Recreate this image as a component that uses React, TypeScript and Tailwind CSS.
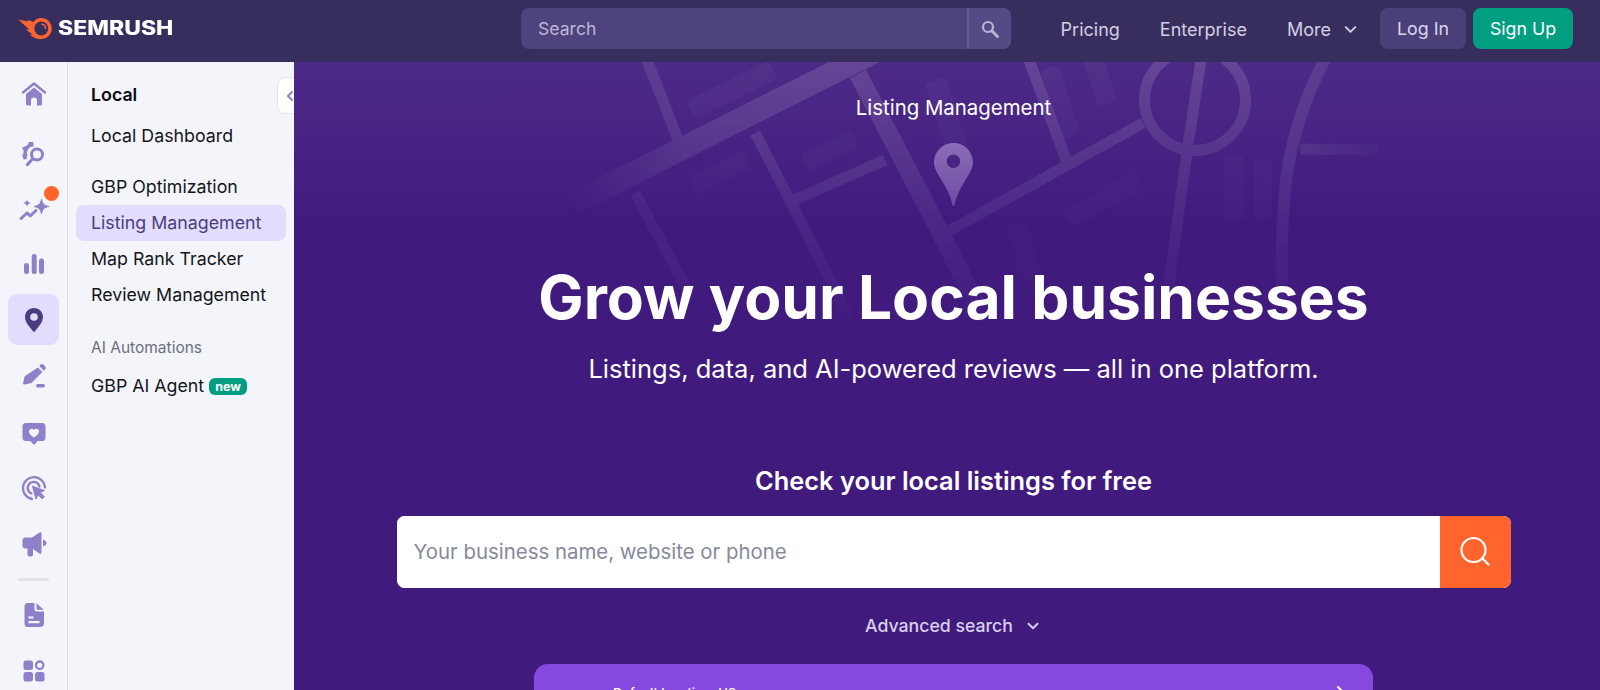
import React from 'react';
import { ChevronDown, ChevronLeft, ChevronRight } from 'lucide-react';

const ICON = '#8f80c9';

function Svg({ children, className = 'h-[26px] w-[26px] overflow-visible' }: { children: React.ReactNode; className?: string }) {
  return (
    <svg viewBox="0 0 26 26" className={className} fill={ICON}>
      {children}
    </svg>
  );
}

const HomeIcon = () => (
  <Svg>
    <path d="M2 11.500 13 2.500l11 9" fill="none" stroke={ICON} strokeWidth="2.400" strokeLinecap="round" strokeLinejoin="round" />
    <path d="M5 13 13 6.500l8 6.500v10a1.500 1.500 0 0 1-1.500 1.500H16v-5a3 3 0 0 0-6 0v5H6.500A1.500 1.500 0 0 1 5 23Z" />
  </Svg>
);

const SeoIcon = () => (
  <Svg>
    <circle cx="16" cy="13.500" r="5.500" fill="none" stroke={ICON} strokeWidth="3" />
    <path d="M11.500 18 6.500 23.500" fill="none" stroke={ICON} strokeWidth="3.200" strokeLinecap="round" />
    <path d="M11.500 3.500A8.500 8.500 0 0 0 5 15.500" fill="none" stroke={ICON} strokeWidth="3.400" />
    <path d="M7.500 1h5v4.500h-5ZM1 7 4.500 5 7 9 3.500 11ZM1 13.500h4l1.200 4-3.500 1.200Z" />
  </Svg>
);

const SparkIcon = () => (
  <Svg>
    <path d="M20.500 4c.8 4.800 2.700 6.700 7.500 7.500-4.800.8-6.700 2.700-7.500 7.500-.8-4.800-2.700-6.700-7.500-7.500 4.800-.8 6.700-2.700 7.500-7.500Z" strokeLinejoin="round" stroke={ICON} />
    <path d="M6 4c.4 2.600 1.400 3.600 4 4-2.600.4-3.600 1.400-4 4-.4-2.600-1.400-3.600-4-4 2.600-.4 3.600-1.400 4-4Z" />
    <path d="M0 23.500 6 18l3.200 2.800L15 15.500" fill="none" stroke={ICON} strokeWidth="3" strokeLinecap="round" strokeLinejoin="round" />
  </Svg>
);

const BarsIcon = () => (
  <Svg>
    <rect x="3" y="12" width="5" height="11" rx="2.500" />
    <rect x="10.700" y="3" width="5" height="20" rx="2.500" />
    <rect x="18" y="7.500" width="5" height="15.500" rx="2.500" />
  </Svg>
);

const PinIcon = () => (
  <svg viewBox="0 0 26 26" className="h-[26px] w-[26px]" fill="#4c3d80">
    <path
      fillRule="evenodd"
      d="M13 1c5 0 9 3.900 9 8.900 0 5.600-5.200 10.300-8 14.300-.5.700-1.500.7-2 0-2.800-4-8-8.700-8-14.300C4 4.900 8 1 13 1Zm0 5.200a3.800 3.800 0 1 0 0 7.600 3.800 3.800 0 0 0 0-7.600Z"
    />
  </svg>
);

const PenIcon = () => (
  <Svg>
    <path d="M19.700 1.600a2 2 0 0 1 2.800 0l1.800 1.800a2 2 0 0 1 0 2.800l-1.500 1.500-4.600-4.600ZM16.800 4.500l4.600 4.600L11 19.500a3 3 0 0 1-1.600.8L3.500 21.500c-.9.200-1.600-.6-1.400-1.500l1.200-5.500c.1-.6.400-1.100.8-1.500Z" />
    <rect x="15" y="21" width="9" height="3.400" rx="1.700" />
  </Svg>
);

const HeartIcon = () => (
  <Svg>
    <path
      fillRule="evenodd"
      d="M5 2h16a3.500 3.500 0 0 1 3.500 3.500v11A3.500 3.500 0 0 1 21 20h-4.500l-2.400 3c-.6.700-1.600.7-2.200 0L9.500 20H5a3.500 3.500 0 0 1-3.500-3.500v-11A3.500 3.500 0 0 1 5 2Zm8 14.500c3.200-2.200 5-3.900 5-6 0-1.600-1.200-2.700-2.600-2.700-1 0-1.900.5-2.400 1.400-.5-.9-1.400-1.400-2.400-1.400C9.200 7.800 8 8.900 8 10.500c0 2.100 1.800 3.800 5 6Z"
    />
  </Svg>
);

const TargetIcon = () => (
  <Svg>
    <path d="M11 24a11 11 0 1 1 13-11.500" fill="none" stroke={ICON} strokeWidth="2.300" strokeLinecap="round" />
    <path d="M10.500 18.500a6 6 0 1 1 8-7" fill="none" stroke={ICON} strokeWidth="2.300" strokeLinecap="round" />
    <path d="M11.500 11.200 23.500 15.500l-4.300 2 4.200 4.200-2.200 2.200-4.200-4.200-2 4.300Z" strokeLinejoin="round" stroke={ICON} />
  </Svg>
);

const MegaphoneIcon = () => (
  <Svg>
    <path d="M18.500 1.500c1-.6 2-.1 2 1.100v18.800c0 1.200-1 1.700-2 1.100L12 18v5.500a2 2 0 0 1-2 2H8.500a2 2 0 0 1-2-2V17.500H4.500A3 3 0 0 1 1.500 14.500v-5A3 3 0 0 1 4.500 6.500H11Z" />
    <path d="M22 8.500c2.300.8 3.500 2 3.500 3.500s-1.200 2.700-3.500 3.500Z" />
  </Svg>
);

const DocIcon = () => (
  <Svg>
    <path
      fillRule="evenodd"
      d="M7 1h6.500v6a2.500 2.500 0 0 0 2.500 2.500h7V21a4 4 0 0 1-3.500 4H7a3.500 3.500 0 0 1-3.500-3.500v-17A3.500 3.500 0 0 1 7 1Zm.5 13.500v2h5v-2Zm0 4.500v2.200h11V19Z"
    />
    <path d="M15.500 1.200 22.800 7.800H16.500a1 1 0 0 1-1-1Z" />
  </Svg>
);

const AppsIcon = () => (
  <Svg>
    <rect x="2.500" y="2.500" width="9.500" height="9.500" rx="2.500" />
    <rect x="2.500" y="14" width="9.500" height="9.500" rx="2.500" />
    <rect x="14" y="14" width="9.500" height="9.500" rx="2.500" />
    <circle cx="18.700" cy="7.200" r="3.700" fill="none" stroke={ICON} strokeWidth="2.300" />
  </Svg>
);

function Rail() {
  return (
    <div className="flex w-[68px] shrink-0 flex-col items-center border-r border-[#dcdde6] pt-[4px]">
      <div className="flex h-[56px] w-full shrink-0 items-center justify-center"><HomeIcon /></div>
      <div className="flex h-[60px] w-full shrink-0 items-center justify-center pt-[4px]"><SeoIcon /></div>
      <div className="relative flex h-[52px] w-full shrink-0 items-center justify-center">
        <SparkIcon />
        <span className="absolute left-[44px] top-[4px] h-[15px] w-[15px] rounded-full bg-[#ff642d]" />
      </div>
      <div className="flex h-[60px] w-full shrink-0 items-center justify-center"><BarsIcon /></div>
      <div className="flex h-[51px] w-[51px] shrink-0 items-center justify-center rounded-[9px] bg-[#e2ddfd]"><PinIcon /></div>
      <div className="flex h-[62px] w-full shrink-0 items-center justify-center"><PenIcon /></div>
      <div className="flex h-[54px] w-full shrink-0 items-center justify-center"><HeartIcon /></div>
      <div className="flex h-[54px] w-full shrink-0 items-center justify-center"><TargetIcon /></div>
      <div className="flex h-[58px] w-full shrink-0 items-center justify-center"><MegaphoneIcon /></div>
      <div className="mt-[5px] h-[3px] w-[31px] shrink-0 rounded-full bg-[#e2e3ea]" />
      <div className="mt-[6px] flex h-[56px] w-full shrink-0 items-center justify-center"><DocIcon /></div>
      <div className="flex h-[56px] w-full shrink-0 items-center justify-center"><AppsIcon /></div>
    </div>
  );
}

function SubNav() {
  const item = 'flex h-[36px] items-center rounded-lg px-[15px] pt-[1px] text-[17.800px] text-[#14151c]';
  return (
    <div className="relative w-[226px] shrink-0 px-[8px] pt-[15px]">
      <div className="flex h-[36px] items-center px-[15px] pt-[1px] text-[17.800px] font-semibold text-[#0b0b12]">Local</div>
      <div className={`${item} mt-[5px]`}>Local Dashboard</div>
      <div className={`${item} mt-[15px]`}>GBP Optimization</div>
      <div className={`${item} bg-[#e2ddfd] !text-[#4c3d80]`}>Listing Management</div>
      <div className={item}>Map Rank Tracker</div>
      <div className={item}>Review Management</div>
      <div className="mt-[17px] flex h-[36px] items-center px-[15px] text-[15.500px] text-[#6c6e80]">AI Automations</div>
      <div className={`${item} mt-[2px] gap-[5px]`}>
        <span>GBP AI Agent</span>
        <span className="rounded-[6px] bg-[#009f81] px-[6px] text-[12.500px] font-bold leading-[17px] text-white">new</span>
      </div>
      <div className="absolute right-0 top-[15px] flex h-[37px] w-[17px] items-center justify-end overflow-hidden rounded-l-lg border border-r-0 border-[#e4e4ee] bg-white">
        <ChevronLeft className="mr-[-4px] h-[16px] w-[16px] shrink-0 text-[#8f80c9]" strokeWidth={3} />
      </div>
    </div>
  );
}

function MapBackdrop() {
  const block = { fill: 'url(#block)' };
  return (
    <svg viewBox="294 62 1306 628" className="absolute inset-0 h-[628px] w-[1306px]">
      <defs>
        <linearGradient id="fadeY" gradientUnits="userSpaceOnUse" x1="0" y1="62" x2="0" y2="340">
          <stop offset="0" stopColor="#fff" stopOpacity="0.13" />
          <stop offset="0.5" stopColor="#fff" stopOpacity="0.07" />
          <stop offset="1" stopColor="#fff" stopOpacity="0" />
        </linearGradient>
        <linearGradient id="fadeX" gradientUnits="userSpaceOnUse" x1="560" y1="0" x2="1400" y2="0">
          <stop offset="0" stopColor="#fff" stopOpacity="0" />
          <stop offset="0.15" stopColor="#fff" stopOpacity="1" />
          <stop offset="0.86" stopColor="#fff" stopOpacity="1" />
          <stop offset="1" stopColor="#fff" stopOpacity="0" />
        </linearGradient>
        <mask id="maskY" maskUnits="userSpaceOnUse" x="294" y="62" width="1306" height="628">
          <rect x="294" y="62" width="1306" height="628" fill="url(#fadeY)" />
        </mask>
        <mask id="maskX" maskUnits="userSpaceOnUse" x="294" y="62" width="1306" height="628">
          <rect x="294" y="62" width="1306" height="628" fill="url(#fadeX)" />
        </mask>
        <linearGradient id="block" gradientUnits="userSpaceOnUse" x1="0" y1="62" x2="0" y2="300">
          <stop offset="0" stopColor="#fff" stopOpacity="0.032" />
          <stop offset="1" stopColor="#fff" stopOpacity="0.004" />
        </linearGradient>
      </defs>
      <g mask="url(#maskY)">
        <g mask="url(#maskX)" fill="none" stroke="#fff">
          <path d="M878 50 570 205" strokeWidth="23" />
          <path d="M645 55 680 145" strokeWidth="11" />
          <path d="M755 133 790 200 850 320" strokeWidth="11" />
          <path d="M790 202 885 160" strokeWidth="11" />
          <path d="M858 74 920 193 985 320" strokeWidth="18" />
          <path d="M635 193 690 295" strokeWidth="11" />
          <path d="M947 232 1143 123" strokeWidth="11" />
          <path d="M1026 52 1068 165" strokeWidth="11" />
          <circle cx="1195" cy="100" r="50.500" strokeWidth="11" />
          <path d="M1201 60 1188 145 1168 290" strokeWidth="11" />
          <path d="M1330 50C1305 95 1290 140 1285 190 1281 235 1281 265 1282 300" strokeWidth="12" />
          <path d="M1300 149 1378 150" strokeWidth="11" />
        </g>
      </g>
      <rect x="686" y="80" width="92" height="20" rx="4" transform="rotate(-26 732 90)" {...block} />
      <rect x="802" y="142" width="56" height="18" rx="3" transform="rotate(-26 830 151)" {...block} />
      <rect x="690" y="162" width="60" height="20" rx="3" transform="rotate(-26 720 172)" {...block} />
      <rect x="938" y="78" width="22" height="90" rx="5" transform="rotate(-18 949 123)" {...block} />
      <rect x="1050" y="66" width="20" height="72" rx="5" transform="rotate(-18 1060 102)" {...block} />
      <rect x="1090" y="55" width="20" height="50" rx="5" transform="rotate(-18 1100 80)" {...block} />
      <rect x="1062" y="190" width="82" height="20" rx="5" transform="rotate(-28 1103 200)" {...block} />
      <rect x="1224" y="155" width="20" height="66" rx="5" {...block} />
      <rect x="1254" y="160" width="18" height="60" rx="5" {...block} />
      <rect x="1016" y="222" width="20" height="70" rx="5" transform="rotate(-16 1026 257)" {...block} />
    </svg>
  );
}

function Header() {
  return (
    <header className="flex h-[62px] shrink-0 items-center bg-[#382e5e] pb-[5px] pr-[27px]">
      <div className="flex w-[521px] shrink-0 items-center pl-[18px]">
        <svg viewBox="0 0 36 24" className="h-[23px] w-[35px]">
          <path
            fill="#ff642d"
            d="M23.500 1C30 1 35 5.900 35 12s-5 11-11.500 11c-5 0-8.600-2.300-11.500-4.800l2.800-.2-6.800-4.600 3.500-.3L0 2.500l10.300 2.200.1-1.600 5.500 2.100C17.800 2.600 20.500 1 23.500 1Z"
          />
          <circle cx="24" cy="12" r="7.200" fill="#382e5e" />
          <path d="M24.500 7.500a4.500 4.500 0 0 1 4 4.500" fill="none" stroke="#ff642d" strokeWidth="1.500" strokeLinecap="round" />
        </svg>
        <span className="ml-[5px] inline-block origin-left scale-x-[1.18] pt-[1px] text-[19.500px] font-extrabold leading-none text-white">
          SEMRUSH
        </span>
      </div>
      <div className="flex h-[41px] w-[490px] shrink-0 overflow-hidden rounded-lg bg-[#4f437d]">
        <div className="flex flex-1 items-center pl-[17px] pt-[2px] text-[17.600px] text-[#bdb7d6]">Search</div>
        <div className="flex w-[44px] items-center justify-center border-l-2 border-[#675c90] bg-[#564a84]">
          <svg viewBox="0 0 20 20" className="h-[20px] w-[20px]" fill="none" stroke="#b9b3d4">
            <circle cx="8" cy="8" r="5" strokeWidth="2.200" />
            <path d="M12 12 17.500 17.500" strokeWidth="3" strokeLinecap="round" />
          </svg>
        </div>
      </div>
      <nav className="ml-auto flex items-center pt-[2px] text-[18px] text-[#d3cee5]">
        <span>Pricing</span>
        <span className="ml-[40px]">Enterprise</span>
        <span className="ml-[40px]">More</span>
        <ChevronDown className="ml-[10px] h-[19px] w-[19px]" strokeWidth={2.500} />
      </nav>
      <div className="ml-[20px] flex h-[41px] w-[86px] items-center justify-center rounded-lg bg-[#4a3f78] pt-[2px] text-[17.800px] text-[#dcd8eb]">Log In</div>
      <div className="ml-[7px] flex h-[41px] w-[100px] items-center justify-center rounded-lg bg-[#009f81] pt-[2px] text-[17.800px] text-white">Sign Up</div>
    </header>
  );
}

export default function App() {
  return (
    <div className="flex h-[690px] w-[1600px] flex-col overflow-hidden bg-[#411a7e] font-['Inter',sans-serif]">
      <Header />
      <div className="flex min-h-0 flex-1">
        <aside className="flex w-[294px] shrink-0 bg-[#f4f5fa]">
          <Rail />
          <SubNav />
        </aside>
        <main className="relative flex flex-1 flex-col items-center bg-linear-to-b from-[#4e2a87] from-0% to-[#411a7e] to-[26%] pl-[13px] pt-[34px] text-white">
          <MapBackdrop />
          <div className="relative shrink-0 text-[20.400px] leading-[24px]">Listing Management</div>
          <svg viewBox="0 0 39 63" className="relative mt-[23px] h-[63px] w-[39px] shrink-0">
            <defs>
              <linearGradient id="pin" x1="0" y1="0" x2="0" y2="1">
                <stop offset="0" stopColor="#8c6cb8" />
                <stop offset="1" stopColor="#6f4ba1" />
              </linearGradient>
            </defs>
            <path
              fill="url(#pin)"
              fillRule="evenodd"
              d="M19.500 0C30.300 0 39 8.700 39 19.500c0 5.200-3.200 10.300-7.500 17.500-5 8.300-9.800 17-11.200 26h-1.600c-1.400-9-6.200-17.700-11.200-26C3.200 29.800 0 24.700 0 19.500 0 8.700 8.700 0 19.500 0Zm0 11.500a6.700 6.700 0 1 0 0 13.400 6.700 6.700 0 0 0 0-13.400Z"
            />
          </svg>
          <h1 className="relative mt-[55px] shrink-0 text-[60.500px] font-bold leading-[72px]">Grow your Local businesses</h1>
          <p className="relative mt-[20px] shrink-0 text-[25.500px] leading-[32px]">Listings, data, and AI-powered reviews — all in one platform.</p>
          <h2 className="relative mt-[80px] shrink-0 text-[25.400px] font-semibold leading-[32px]">Check your local listings for free</h2>
          <div className="relative mt-[19px] flex h-[72px] w-[1114px] shrink-0 overflow-hidden rounded-lg bg-white">
            <input
              placeholder="Your business name, website or phone"
              className="min-w-0 flex-1 bg-white pl-[17px] pt-[1px] text-[20.400px] text-[#14151c] outline-none placeholder:text-[#868a9c]"
            />
            <div className="flex w-[71px] items-center justify-center bg-[#ff642d]">
              <svg viewBox="0 0 32 32" className="h-[32px] w-[32px]" fill="none" stroke="#fff" strokeWidth="2.200">
                <circle cx="14.500" cy="14" r="12" />
                <path d="M23.500 22.500 29.500 28.500" strokeLinecap="round" />
              </svg>
            </div>
          </div>
          <div className="relative mt-[26px] flex h-[24px] shrink-0 items-center text-[17.700px] font-medium text-[#d8d0ec]">
            Advanced search
            <ChevronDown className="ml-[11px] h-[18px] w-[18px]" strokeWidth={2.500} />
          </div>
          <div className="relative mt-[26px] flex h-[80px] w-[839px] shrink-0 justify-between rounded-t-[14px] bg-[#8549e0] pl-[79px] pr-[20px] pt-[17px] text-[13px] font-medium leading-[24px]">
            <span>Default location: US</span>
            <ChevronRight className="h-[24px] w-[24px]" />
          </div>
        </main>
      </div>
    </div>
  );
}
